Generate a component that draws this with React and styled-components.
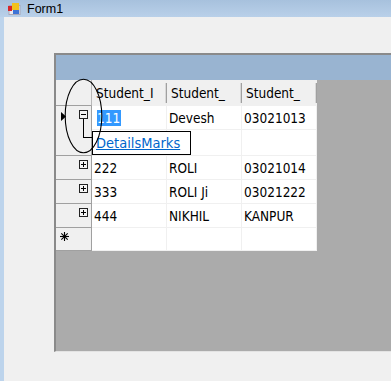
import { Fragment } from "react";
import styled, { createGlobalStyle } from "styled-components";

const GlobalStyle = createGlobalStyle`
  html, body {
    margin: 0;
    padding: 0;
    width: 391px;
    height: 381px;
    overflow: hidden;
    background: #f0f0f0;
  }
`;

const Window = styled.div`
  width: 391px;
  height: 381px;
  display: flex;
  flex-direction: column;
  font-family: "DejaVu Sans Condensed", "DejaVu Sans", sans-serif;
`;

const TitleBar = styled.div`
  height: 17px;
  flex-shrink: 0;
  display: flex;
  align-items: center;
  gap: 6px;
  padding-left: 8px;
  background: linear-gradient(#a7c1dd, #b9d0e9);
  font: 12.5px "Liberation Sans", sans-serif;
  color: #000;
`;

const Frame = styled.div`
  flex: 1;
  display: flex;
  padding-left: 4px;
  background: #bdd4ec;
`;

const Client = styled.div`
  flex: 1;
  background: #f0f0f0;
  padding: 36px 0 0 50px;
  overflow: hidden;
`;

const GridBox = styled.div`
  position: relative;
  width: 360px;
  height: 299px;
  box-sizing: border-box;
  border-top: 2px solid #8a8a8a;
  border-left: 2px solid #8a8a8a;
  border-bottom: 1px solid #e3e3e3;
  box-shadow: inset 1px 1px 0 #6b6b6b;
  display: flex;
  flex-direction: column;
`;

const Caption = styled.div`
  height: 25px;
  flex-shrink: 0;
  background: #99b4d1;
`;

const Body = styled.div`
  flex: 1;
  background: #ababab;
`;

const Table = styled.div`
  display: grid;
  width: 261px;
  grid-template-columns: 36px 75px 75px 75px;
  grid-template-rows: 26px 24px 26px 24px 24px 24px 23px;
  font-size: 13.5px;
  color: #000;
`;

const Corner = styled.div`
  background: #f0f0f0;
  border-right: 1px solid #b8b8b8;
  border-bottom: 1px solid #a0a0a0;
`;

const HeaderCell = styled.div`
  position: relative;
  background: #f0f0f0;
  display: flex;
  align-items: center;
  padding-left: 4px;
  white-space: nowrap;
  overflow: hidden;
  &::after {
    content: "";
    position: absolute;
    right: 0;
    top: 3px;
    bottom: 3px;
    width: 1px;
    background: #a0a0a0;
    box-shadow: -1px 0 0 #d8d8d8;
  }
`;

const RowHead = styled.div`
  box-sizing: border-box;
  background: #f0f0f0;
  border-right: 1px solid #a0a0a0;
  border-bottom: ${(p) => (p.$open ? "none" : "1px solid #a0a0a0")};
  display: flex;
  align-items: flex-start;
  padding: 4px 3px 0 5px;
`;

const DetailHead = styled.div`
  background: #f0f0f0;
  border-right: 1px solid #a0a0a0;
  border-bottom: 1px solid #a0a0a0;
`;

const Elbow = styled.div`
  width: 8px;
  height: 7px;
  margin-left: 27px;
  border-left: 1px solid #000;
  border-bottom: 1px solid #000;
`;

const Node = styled.div`
  margin-left: auto;
  align-self: stretch;
  display: flex;
  flex-direction: column;
  align-items: center;
`;

const Stem = styled.div`
  flex: 1;
  width: 1px;
  background: #000;
`;

const Arrow = styled.svg`
  margin-top: 2px;
`;

const Cell = styled.div`
  box-sizing: border-box;
  background: #fff;
  border-right: 1px solid #f0f0f0;
  border-bottom: 1px solid #f0f0f0;
  display: flex;
  align-items: center;
  padding-left: 2px;
  white-space: nowrap;
  overflow: hidden;
`;

const Selected = styled.span`
  margin-left: 3px;
  background: #3399ff;
  color: #fff;
  line-height: 16px;
  padding-right: 1px;
`;

const DetailCell = styled.div`
  grid-column: 2 / 5;
  box-sizing: border-box;
  background:
    linear-gradient(#f0f0f0, #f0f0f0) 74px 0 / 1px 100% no-repeat,
    linear-gradient(#f0f0f0, #f0f0f0) 149px 0 / 1px 100% no-repeat,
    #fff;
  border-right: 1px solid #f0f0f0;
  border-bottom: 1px solid #f0f0f0;
  padding-top: 1px;
`;

const RelationBox = styled.div`
  box-sizing: border-box;
  width: 99px;
  height: 24px;
  border: 1px solid #000;
  background: #fff;
  display: flex;
  align-items: center;
  padding-left: 3px;
`;

const RelationLink = styled.a`
  font-size: 14.5px;
  color: #0066cc;
  text-decoration: underline;
  white-space: nowrap;
`;

const Mark = styled.svg`
  position: absolute;
  left: 8px;
  top: 23px;
  pointer-events: none;
`;

const FormIcon = () => (
  <svg width="13" height="12" viewBox="0 0 13 12">
    <rect x="1" y="2.5" width="11" height="9" fill="#e8e8ee" stroke="#a8a8b8" />
    <rect x="0" y="3" width="4" height="5" fill="#d8262a" />
    <rect x="4" y="0" width="7" height="7" fill="#f2c21d" />
    <rect x="5" y="7" width="6" height="4" fill="#3d73d6" />
  </svg>
);

const ExpandBox = ({ open }) => (
  <svg width="9" height="9" viewBox="0 0 9 9">
    <rect x="0.5" y="0.5" width="8" height="8" fill="#f4f4f4" stroke="#222" />
    <line x1="2" y1="4.5" x2="7" y2="4.5" stroke="#000" />
    {!open && <line x1="4.5" y1="2" x2="4.5" y2="7" stroke="#000" />}
  </svg>
);

const NewRowStar = () => (
  <svg width="9" height="9" viewBox="0 0 9 9" style={{ marginLeft: -1 }}>
    <g stroke="#000" strokeWidth="1.1">
      <line x1="4.5" y1="0" x2="4.5" y2="9" />
      <line x1="0" y1="4.5" x2="9" y2="4.5" />
      <line x1="1.3" y1="1.3" x2="7.7" y2="7.7" />
      <line x1="7.7" y1="1.3" x2="1.3" y2="7.7" />
    </g>
  </svg>
);

const rows = [
  ["222", "ROLI", "03021014"],
  ["333", "ROLI Ji", "03021222"],
  ["444", "NIKHIL", "KANPUR"],
];

export default function App() {
  return (
    <>
      <GlobalStyle />
      <Window>
        <TitleBar>
          <FormIcon />
          <span>Form1</span>
        </TitleBar>
        <Frame>
          <Client>
            <GridBox>
              <Caption />
              <Body>
                <Table>
                  <Corner />
                  <HeaderCell>Student_I</HeaderCell>
                  <HeaderCell>Student_</HeaderCell>
                  <HeaderCell>Student_</HeaderCell>

                  <RowHead $open>
                    <Arrow width="5" height="9" viewBox="0 0 5 9">
                      <polygon points="0,0 5,4.5 0,9" fill="#000" />
                    </Arrow>
                    <Node>
                      <ExpandBox open />
                      <Stem />
                    </Node>
                  </RowHead>
                  <Cell>
                    <Selected>111</Selected>
                  </Cell>
                  <Cell>Devesh</Cell>
                  <Cell>03021013</Cell>

                  <DetailHead>
                    <Elbow />
                  </DetailHead>
                  <DetailCell>
                    <RelationBox>
                      <RelationLink>DetailsMarks</RelationLink>
                    </RelationBox>
                  </DetailCell>

                  {rows.map((r) => (
                    <Fragment key={r[0]}>
                      <RowHead>
                        <Node>
                          <ExpandBox />
                        </Node>
                      </RowHead>
                      {r.map((v, i) => (
                        <Cell key={i}>{v}</Cell>
                      ))}
                    </Fragment>
                  ))}

                  <RowHead>
                    <NewRowStar />
                  </RowHead>
                  <Cell />
                  <Cell />
                  <Cell />
                </Table>
              </Body>
              <Mark width="39" height="76" viewBox="0 0 39 76">
                <ellipse cx="19.5" cy="38" rx="18.3" ry="36.8" fill="none" stroke="#000" strokeWidth="1.1" />
              </Mark>
            </GridBox>
          </Client>
        </Frame>
      </Window>
    </>
  );
}
